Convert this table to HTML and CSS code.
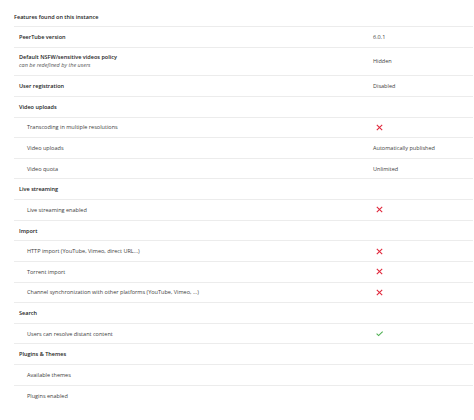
FILE: index.html
```html
<!DOCTYPE html>
<html>
<head>
<meta charset="utf-8">
<link rel="stylesheet" href="styles.css">
</head>
<body>
<div class="features">
  <div class="title">Features found on this instance</div>
  <div class="row"><div class="label head">PeerTube version</div><div class="value">6.0.1</div></div>
  <div class="row tall"><div class="label head">Default NSFW/sensitive videos policy<div class="sub">can be redefined by the users</div></div><div class="value">Hidden</div></div>
  <div class="row"><div class="label head">User registration</div><div class="value">Disabled</div></div>
  <div class="row"><div class="label head">Video uploads</div><div class="value"></div></div>
  <div class="row"><div class="label item">Transcoding in multiple resolutions</div><div class="value"><svg class="icon no" viewBox="0 0 10 10"><path d="M2 2L8 8M8 2L2 8"/></svg></div></div>
  <div class="row"><div class="label item">Video uploads</div><div class="value">Automatically published</div></div>
  <div class="row"><div class="label item">Video quota</div><div class="value">Unlimited</div></div>
  <div class="row"><div class="label head">Live streaming</div><div class="value"></div></div>
  <div class="row"><div class="label item">Live streaming enabled</div><div class="value"><svg class="icon no" viewBox="0 0 10 10"><path d="M2 2L8 8M8 2L2 8"/></svg></div></div>
  <div class="row"><div class="label head">Import</div><div class="value"></div></div>
  <div class="row"><div class="label item">HTTP import (YouTube, Vimeo, direct URL...)</div><div class="value"><svg class="icon no" viewBox="0 0 10 10"><path d="M2 2L8 8M8 2L2 8"/></svg></div></div>
  <div class="row"><div class="label item">Torrent import</div><div class="value"><svg class="icon no" viewBox="0 0 10 10"><path d="M2 2L8 8M8 2L2 8"/></svg></div></div>
  <div class="row"><div class="label item">Channel synchronization with other platforms (YouTube, Vimeo, ...)</div><div class="value"><svg class="icon no" viewBox="0 0 10 10"><path d="M2 2L8 8M8 2L2 8"/></svg></div></div>
  <div class="row"><div class="label head">Search</div><div class="value"></div></div>
  <div class="row"><div class="label item">Users can resolve distant content</div><div class="value"><svg class="icon yes" viewBox="0 0 10 10"><path d="M1.8 5.2L4 7.3L8.5 2.8"/></svg></div></div>
  <div class="row"><div class="label head">Plugins &amp; Themes</div><div class="value"></div></div>
  <div class="row"><div class="label item">Available themes</div><div class="value"></div></div>
  <div class="row last"><div class="label item">Plugins enabled</div><div class="value"></div></div>
</div>
</body>
</html>
```
FILE: styles.css
```css
html, body {
  margin: 0;
  padding: 0;
  background: #fff;
}
body {
  font-family: "Open Sans", "Liberation Sans", sans-serif;
  font-size: 5.54px;
  color: #404040;
}
.features {
  margin-left: 14px;
  width: 459px;
}
.title {
  height: 27px;
  box-sizing: border-box;
  padding-top: 13px;
  font-weight: 600;
  color: #222;
  border-bottom: 1px solid #ececec;
  line-height: 8px;
}
.row {
  display: flex;
  align-items: center;
  height: 20.64px;
  box-sizing: border-box;
  border-bottom: 1px solid #ececec;
}
.row.tall {
  height: 28.7px;
}
.row.last {
  border-bottom: none;
}
.label {
  width: 354px;
  box-sizing: border-box;
  line-height: 8px;
}
.head {
  padding-left: 5px;
  font-weight: 600;
  color: #222;
}
.item {
  padding-left: 13px;
}
.sub {
  font-weight: 400;
  font-style: italic;
  color: #5a5a5a;
}
.value {
  padding-left: 5px;
  display: flex;
  align-items: center;
}
.icon {
  width: 9px;
  height: 9px;
  margin-left: 1.5px;
  fill: none;
  stroke-width: 1.2;
}
.icon.no { stroke: #e0283c; }
.icon.yes { stroke: #4caf50; }
```
